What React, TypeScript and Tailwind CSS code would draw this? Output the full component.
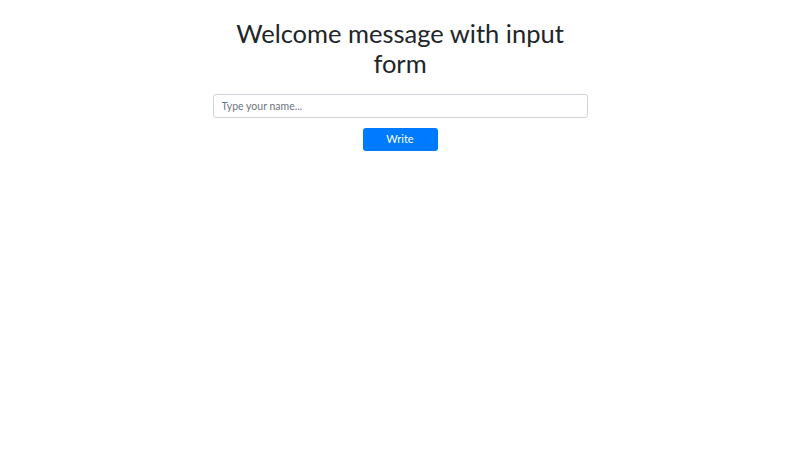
import { useState } from 'react';

export default function App() {
  const [name, setName] = useState('');

  return (
    <div className="min-h-screen bg-white font-['Lato',sans-serif] text-[#212529]">
      <div className="mx-auto w-[375px] pt-[18px] text-center">
        <h1 className="text-[25.5px] leading-[30px] font-normal">Welcome message with input form</h1>
        <input
          type="text"
          value={name}
          onChange={(e) => setName(e.target.value)}
          placeholder="Type your name..."
          className="mt-4 block h-6 w-full rounded-[3px] border border-[#ced4da] px-2 text-[10.5px] placeholder:text-[#6c757d] focus:outline-none"
        />
        <button
          type="button"
          className="mt-[10px] h-[23px] w-[75px] rounded-[3px] bg-[#007bff] text-[11px] text-white"
        >
          Write
        </button>
      </div>
    </div>
  );
}
